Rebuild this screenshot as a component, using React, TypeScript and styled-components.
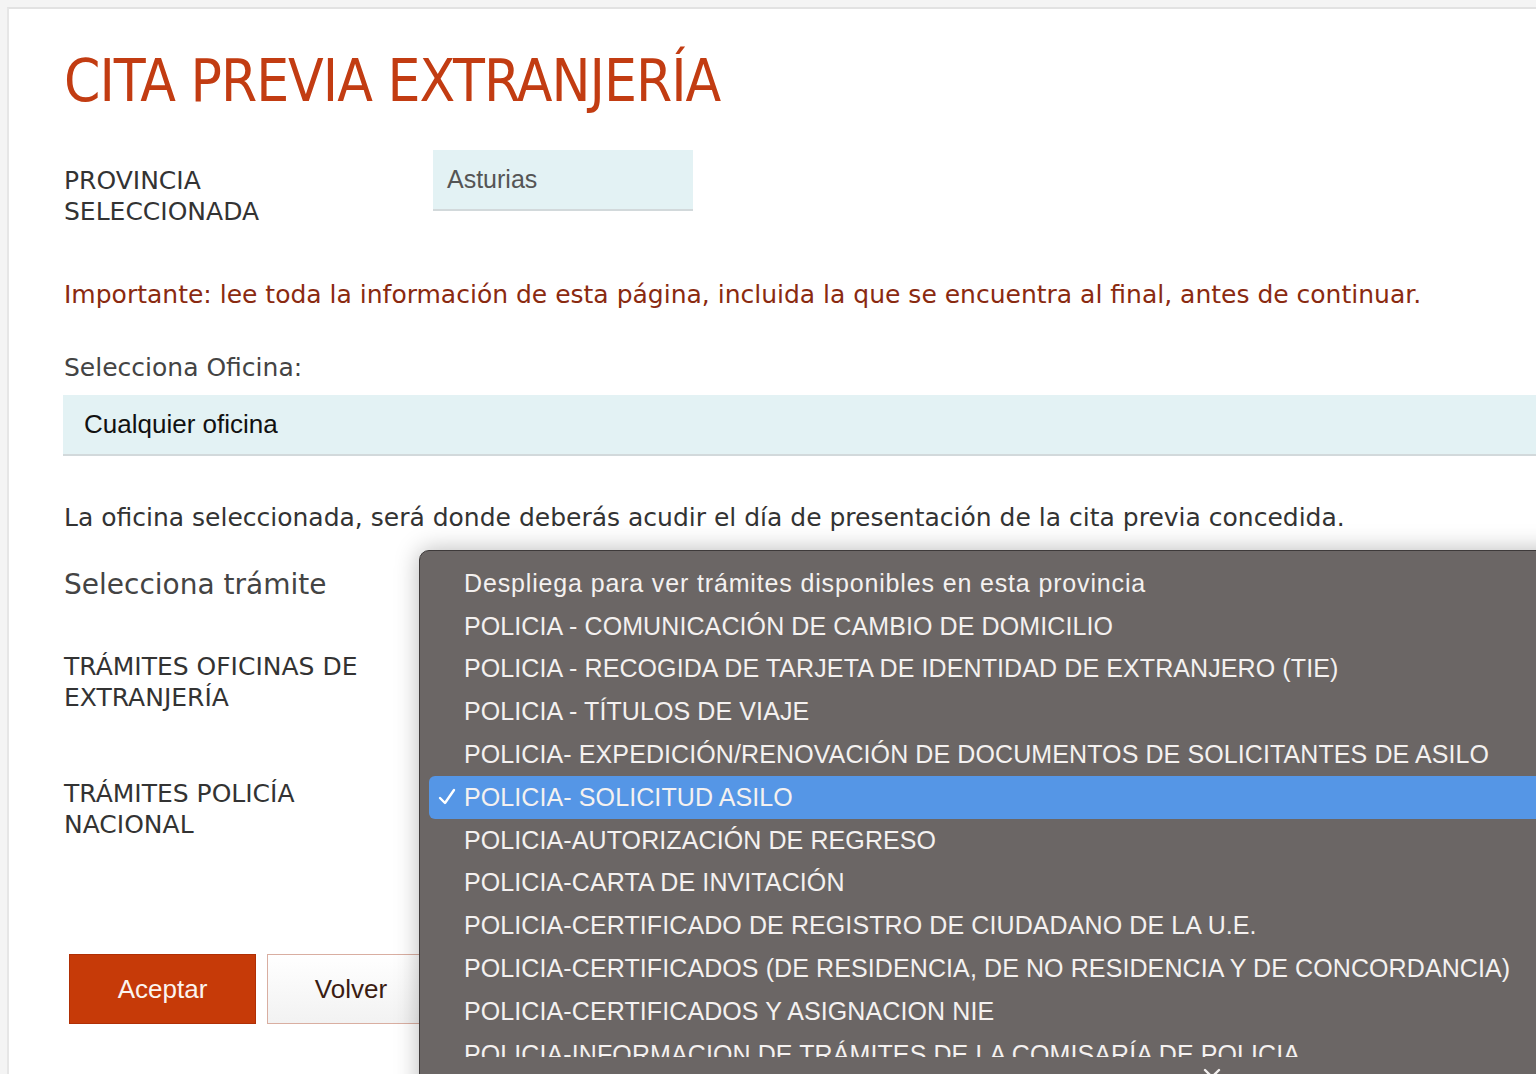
import React from "react";
import styled, { createGlobalStyle } from "styled-components";

const Global = createGlobalStyle`
  html, body { margin: 0; padding: 0; background: #f4f4f4; }
  body { overflow: hidden; }
  * { box-sizing: border-box; }
`;

const Page = styled.div`
  position: relative;
  width: 1536px;
  height: 1074px;
  overflow: hidden;
  padding: 7px 0 0 7px;
  background: #f4f4f4;
`;

const Card = styled.main`
  height: 1100px;
  background: #fff;
  border-top: 2px solid #e2e2e2;
  border-left: 2px solid #e6e6e6;
  padding: 0 0 0 55px;
  display: flex;
  flex-direction: column;
  font-family: "DejaVu Sans", Verdana, sans-serif;
`;

const Title = styled.h1`
  margin: 37px 0 0 0;
  font-size: 58px;
  line-height: 70px;
  font-weight: normal;
  font-stretch: condensed;
  color: #c23c12;
  letter-spacing: -1px;
`;

const FieldRow = styled.div<{ $top: number }>`
  display: flex;
  align-items: flex-start;
  margin-top: ${(p) => p.$top}px;
`;

const Label = styled.div<{ $offset?: number }>`
  width: 369px;
  flex: none;
  margin-top: ${(p) => p.$offset ?? 0}px;
  font-size: 25px;
  line-height: 31px;
  color: #333;
  text-transform: uppercase;
`;

const ValueBox = styled.div`
  width: 260px;
  height: 61px;
  background: #e3f2f4;
  border-bottom: 2px solid #d2d9db;
  padding: 0 14px;
  display: flex;
  align-items: center;
  font-family: "Liberation Sans", Arial, sans-serif;
  font-size: 25px;
  color: #555;
`;

const Text = styled.p<{ $top: number; $color?: string; $size?: number; $lh?: number }>`
  margin: ${(p) => p.$top}px 0 0 0;
  font-size: ${(p) => p.$size ?? 25}px;
  line-height: ${(p) => p.$lh ?? 31}px;
  color: ${(p) => p.$color ?? "#333"};
  white-space: nowrap;
`;

const SelectBar = styled.div`
  margin: 12px -40px 0 -1px;
  height: 61px;
  background: #e3f2f4;
  border-bottom: 2px solid #d2d9db;
  padding: 0 21px;
  display: flex;
  align-items: center;
  font-family: "Liberation Sans", Arial, sans-serif;
  font-size: 26px;
  color: #111;
`;

const Buttons = styled.div`
  display: flex;
  gap: 11px;
  margin: 114px 0 0 5px;
`;

const Button = styled.button<{ $primary?: boolean }>`
  width: ${(p) => (p.$primary ? 187 : 168)}px;
  height: 70px;
  font-family: "Liberation Sans", Arial, sans-serif;
  font-size: 26px;
  cursor: pointer;
  border: 1px solid ${(p) => (p.$primary ? "#b02f05" : "#d9aea1")};
  background: ${(p) => (p.$primary ? "#c63a08" : "linear-gradient(#ffffff, #f2f2f2)")};
  color: ${(p) => (p.$primary ? "#fbf4ef" : "#3b1c12")};
`;

const Menu = styled.div`
  position: absolute;
  left: 419px;
  top: 550px;
  width: 1200px;
  height: 600px;
  background: #6b6665;
  border: 1px solid #3e3a3a;
  border-radius: 10px;
  box-shadow: 0 0 24px rgba(0, 0, 0, 0.28);
  padding: 11px 0 0 0;
  font-family: "Liberation Sans", Arial, sans-serif;
`;

const MenuList = styled.ul`
  list-style: none;
  margin: 0;
  padding: 0;
  height: 495px;
  overflow: hidden;
`;

const MenuItem = styled.li<{ $selected?: boolean; $placeholder?: boolean }>`
  position: relative;
  height: 42.8px;
  margin: 0 0 0 9px;
  padding-left: 35px;
  display: flex;
  align-items: center;
  font-size: 25px;
  letter-spacing: ${(p) => (p.$placeholder ? 0.85 : 0.1)}px;
  color: #f4f1f0;
  white-space: nowrap;
  border-radius: 6px;
  background: ${(p) => (p.$selected ? "#5596e6" : "transparent")};
`;

const Check = styled.svg`
  position: absolute;
  left: 8px;
  top: 50%;
  transform: translateY(-50%);
`;

const ScrollArrow = styled.div`
  position: absolute;
  left: 783px;
  top: 515px;
`;

const items = [
  "Despliega para ver trámites disponibles en esta provincia",
  "POLICIA - COMUNICACIÓN DE CAMBIO DE DOMICILIO",
  "POLICIA - RECOGIDA DE TARJETA DE IDENTIDAD DE EXTRANJERO (TIE)",
  "POLICIA - TÍTULOS DE VIAJE",
  "POLICIA- EXPEDICIÓN/RENOVACIÓN DE DOCUMENTOS DE SOLICITANTES DE ASILO",
  "POLICIA- SOLICITUD ASILO",
  "POLICIA-AUTORIZACIÓN DE REGRESO",
  "POLICIA-CARTA DE INVITACIÓN",
  "POLICIA-CERTIFICADO DE REGISTRO DE CIUDADANO DE LA U.E.",
  "POLICIA-CERTIFICADOS (DE RESIDENCIA, DE NO RESIDENCIA Y DE CONCORDANCIA)",
  "POLICIA-CERTIFICADOS Y ASIGNACION NIE",
  "POLICIA-INFORMACION DE TRÁMITES DE LA COMISARÍA DE POLICIA",
  "POLICIA-TOMA DE HUELLAS (EXPEDICIÓN DE TARJETA) Y RENOVACIÓN DE TARJETA DE LARGA DURACIÓN",
];

export default function App() {
  return (
    <Page>
      <Global />
      <Card>
        <Title>CITA PREVIA EXTRANJERÍA</Title>
        <FieldRow $top={34}>
          <Label $offset={15}>
            Provincia
            <br />
            Seleccionada
          </Label>
          <ValueBox>Asturias</ValueBox>
        </FieldRow>
        <Text $top={52} $color="#8a2a10">
          Importante: lee toda la información de esta página, incluida la que se encuentra al final, antes de continuar.
        </Text>
        <Text $top={42} $color="#444">
          Selecciona Oficina:
        </Text>
        <SelectBar>Cualquier oficina</SelectBar>
        <Text $top={46}>
          La oficina seleccionada, será donde deberás acudir el día de presentación de la cita previa concedida.
        </Text>
        <Text $top={34} $size={28} $lh={36} $color="#444">
          Selecciona trámite
        </Text>
        <FieldRow $top={48}>
          <Label>
            Trámites oficinas de
            <br />
            extranjería
          </Label>
        </FieldRow>
        <FieldRow $top={65}>
          <Label>
            Trámites policía
            <br />
            nacional
          </Label>
        </FieldRow>
        <Buttons>
          <Button $primary>Aceptar</Button>
          <Button>Volver</Button>
        </Buttons>
      </Card>
      <Menu>
        <MenuList>
          {items.map((t, i) => (
            <MenuItem key={i} $selected={i === 5} $placeholder={i === 0}>
              {i === 5 && (
                <Check width="20" height="20" viewBox="0 0 20 20">
                  <path d="M3 11 L8 16 L17 3" fill="none" stroke="#fff" strokeWidth="2.4" strokeLinecap="round" strokeLinejoin="round" />
                </Check>
              )}
              {t}
            </MenuItem>
          ))}
        </MenuList>
        <ScrollArrow>
          <svg width="18" height="12" viewBox="0 0 18 12">
            <path d="M2 2 L9 9 L16 2" fill="none" stroke="#f4f1f0" strokeWidth="2.4" strokeLinecap="round" strokeLinejoin="round" />
          </svg>
        </ScrollArrow>
      </Menu>
    </Page>
  );
}
